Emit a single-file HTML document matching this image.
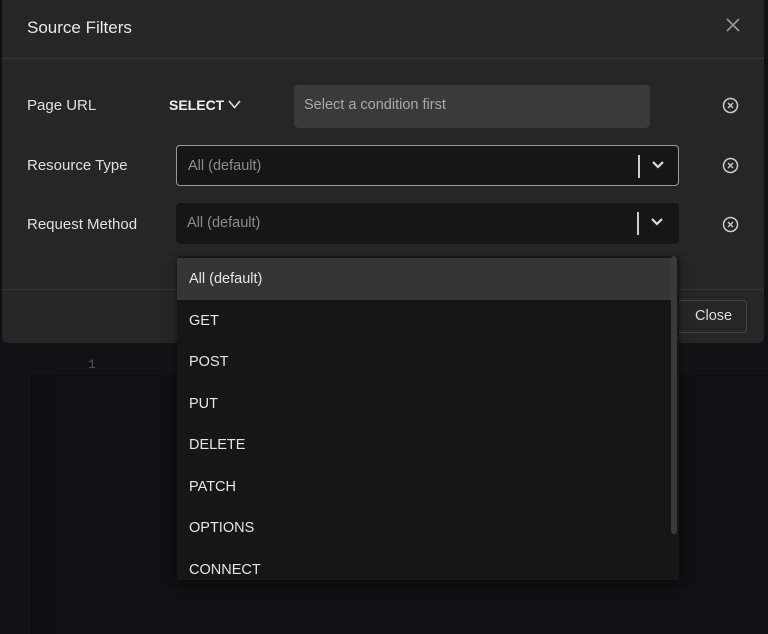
<!DOCTYPE html>
<html><head><meta charset="utf-8"><style>
*{box-sizing:border-box;margin:0;padding:0}
body{width:768px;height:634px;overflow:hidden;background:#111114;font-family:"Liberation Sans",sans-serif;position:relative}
.bg1{position:absolute;left:0;top:340px;width:768px;height:294px;background:#121215}
.gut{position:absolute;left:30px;top:375px;width:25px;height:259px;background:#0f0f12}
.gut2{position:absolute;left:55px;top:375px;width:713px;height:259px;background:#101013}
.ln{position:absolute;left:88px;top:357px;color:#555;font-family:"Liberation Mono",monospace;font-size:13px}
.dlg{position:absolute;left:2px;top:0;width:762px;height:343px;background:#262626;border-radius:0 0 6px 6px}
.hd{position:absolute;left:0;top:0;width:100%;height:59px;border-bottom:1px solid #363636}
.title{position:absolute;left:25px;top:18px;color:#e8e8e8;font-size:17px}
.x{position:absolute;left:722px;top:16px;width:18px;height:18px}
.lbl{position:absolute;left:25px;color:#e0e0e0;font-size:15px}
.sel{position:absolute;left:167px;top:97px;color:#eee;font-size:14px;font-weight:bold}
.inp{position:absolute;left:292px;top:85px;width:356px;height:43px;background:#3a3a3a;border-radius:4px;color:#aaa;font-size:14.5px;padding:12px 10px}
.box{position:absolute;left:174px;width:503px;height:41px;background:#161616;border-radius:4px;color:#8c8c8c;font-size:14.5px;padding:12px 11px}
.box .bar{position:absolute;left:461px;top:9px;width:2px;height:23px;background:#ccc}
.box svg{position:absolute;left:474px;top:14px}
.ci{position:absolute;left:720px;width:17px;height:17px}
.ft{position:absolute;left:0;top:289px;width:100%;border-top:1px solid #333}
.close{position:absolute;left:675px;top:300px;width:70px;height:33px;border:1px solid #444;border-radius:4px;color:#ddd;font-size:14.5px;padding:7px 0 0 17px}
.menu{position:absolute;left:177px;top:256px;width:502px;height:324px;background:#161616;box-shadow:0 2px 8px rgba(0,0,0,.5)}
.it{height:41.5px;color:#e6e6e6;font-size:14.5px;padding:13px 12px;width:494px}
.it.h{background:#353535}
.sb{position:absolute;left:494px;top:0;width:6px;height:278px;background:#3a3a3a;border-radius:3px}
</style></head><body>
<div class="bg1"></div><div class="gut2"></div><div class="gut"></div>
<div class="ln">1</div>
<div class="dlg">
 <div class="hd"></div>
 <div class="title">Source Filters</div>
 <svg class="x" viewBox="0 0 18 18"><path d="M3 3L15 15M15 3L3 15" stroke="#999" stroke-width="1.6"/></svg>
 <div class="lbl" style="top:97px">Page URL</div>
 <div class="lbl" style="top:157px">Resource Type</div>
 <div class="lbl" style="top:216px">Request Method</div>
 <div class="sel">SELECT <svg width="13" height="9" viewBox="0 0 13 9" style="vertical-align:1px"><path d="M1 1L6.5 7.5L12 1" stroke="#ddd" stroke-width="1.6" fill="none"/></svg></div>
 <div class="inp">Select a condition first</div>
 <div class="box" style="top:145px;border:1px solid #9a9a9a">All (default)<div class="bar"></div><svg width="14" height="9" viewBox="0 0 14 9"><path d="M2 2L7 7L12 2" stroke="#ddd" stroke-width="2.2" fill="none"/></svg></div>
 <div class="box" style="top:203px">All (default)<div class="bar"></div><svg width="14" height="9" viewBox="0 0 14 9"><path d="M2 2L7 7L12 2" stroke="#ddd" stroke-width="2.2" fill="none"/></svg></div>
 <svg class="ci" style="top:97px" viewBox="0 0 17 17"><circle cx="8.5" cy="8.5" r="7" stroke="#ccc" stroke-width="1.5" fill="none"/><path d="M6 6L11 11M11 6L6 11" stroke="#ccc" stroke-width="1.4"/></svg>
 <svg class="ci" style="top:157px" viewBox="0 0 17 17"><circle cx="8.5" cy="8.5" r="7" stroke="#ccc" stroke-width="1.5" fill="none"/><path d="M6 6L11 11M11 6L6 11" stroke="#ccc" stroke-width="1.4"/></svg>
 <svg class="ci" style="top:216px" viewBox="0 0 17 17"><circle cx="8.5" cy="8.5" r="7" stroke="#ccc" stroke-width="1.5" fill="none"/><path d="M6 6L11 11M11 6L6 11" stroke="#ccc" stroke-width="1.4"/></svg>
 <div class="ft"></div>
 <div class="close">Close</div>
</div>
<div class="menu">
 <div class="it h" style="margin-top:2px">All (default)</div>
 <div class="it">GET</div><div class="it">POST</div><div class="it">PUT</div><div class="it">DELETE</div><div class="it">PATCH</div><div class="it">OPTIONS</div><div class="it">CONNECT</div>
 <div class="sb"></div>
</div>
</body></html>
